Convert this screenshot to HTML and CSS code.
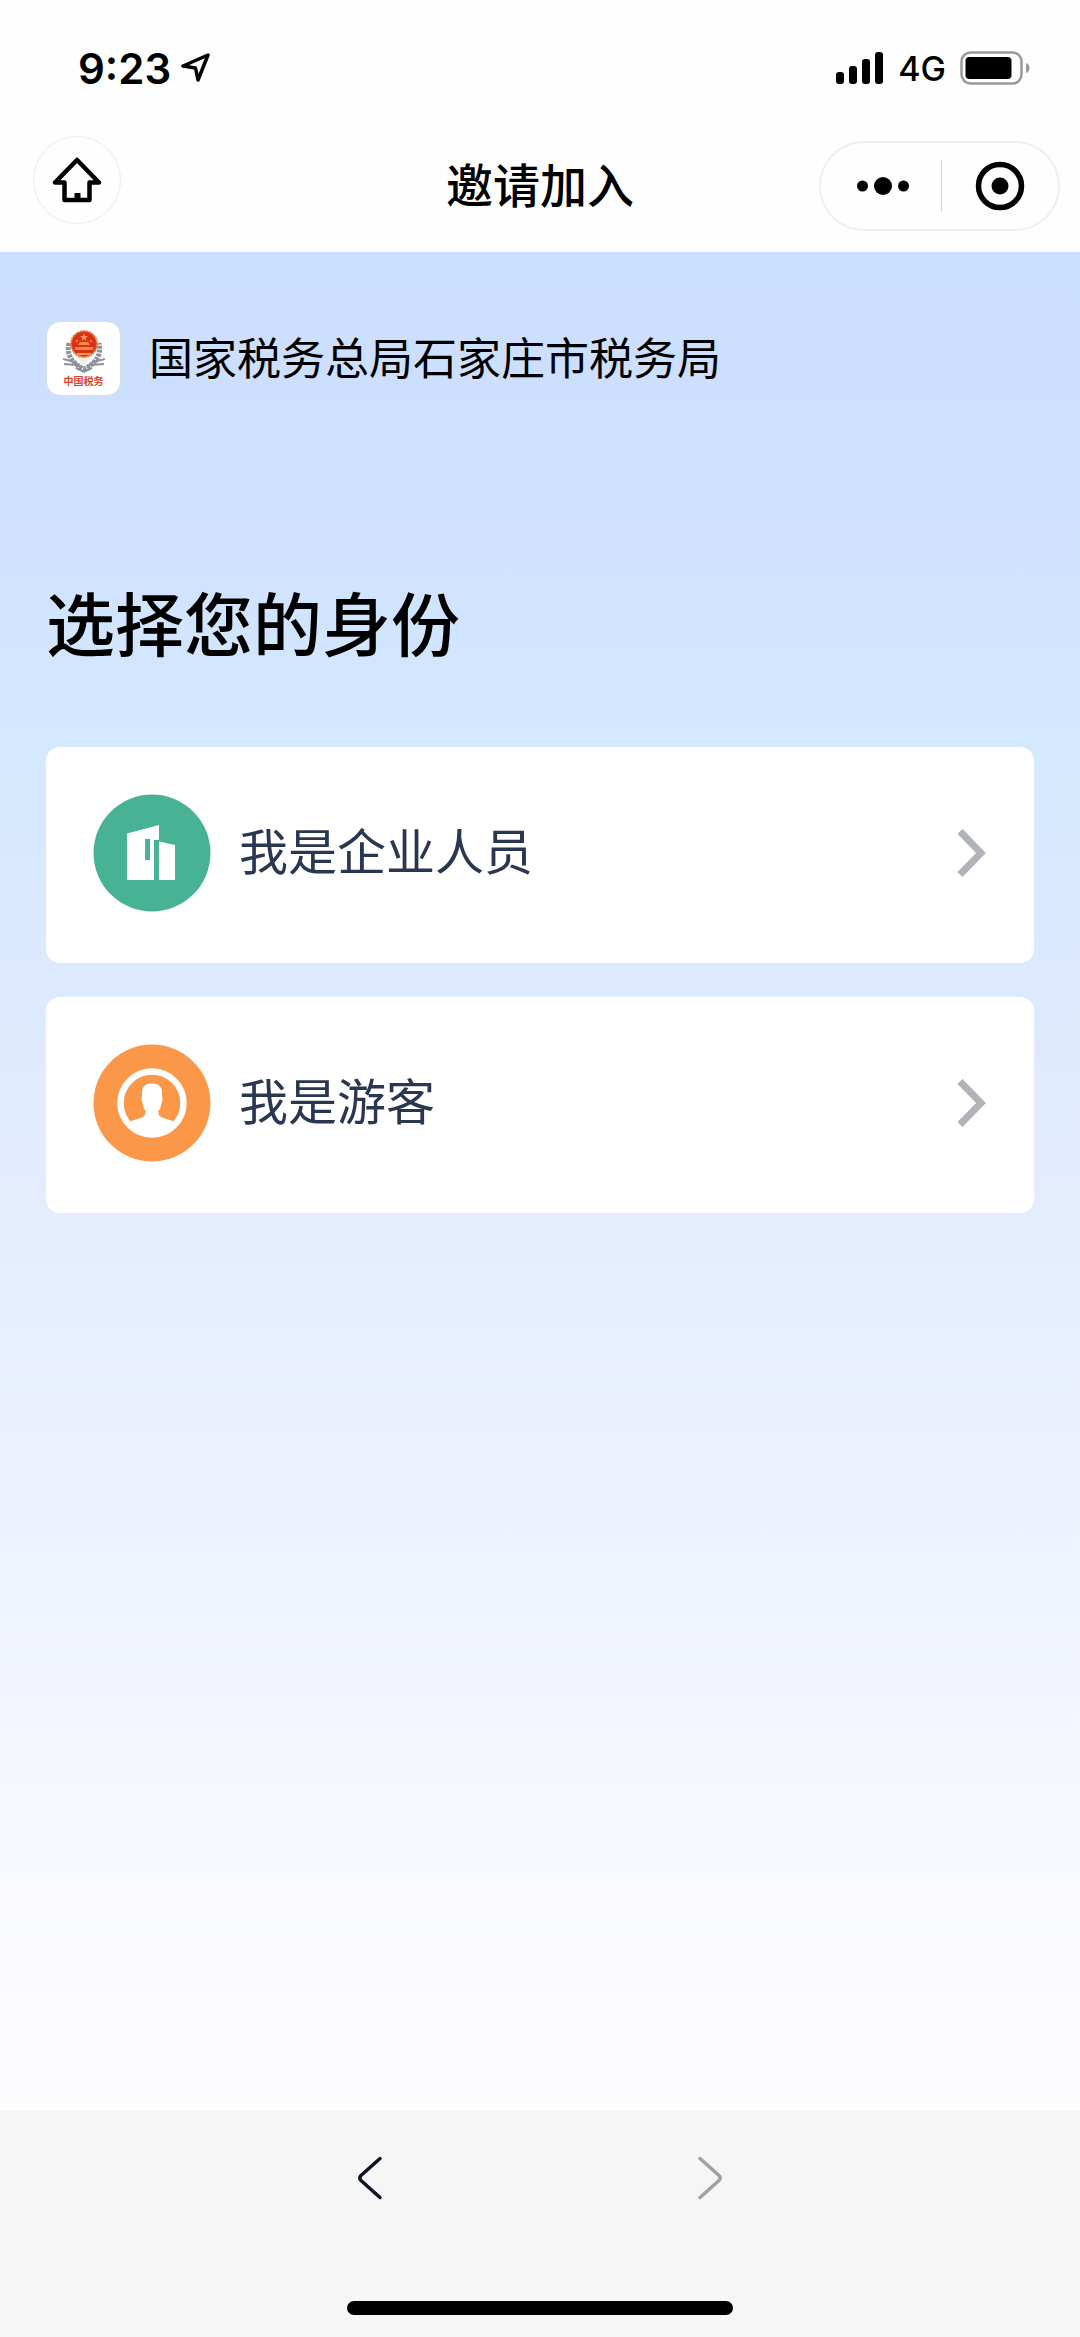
FILE: index.html
```html
<!DOCTYPE html>
<html lang="zh-CN">
<head>
    <meta charset="UTF-8">
    <meta name="viewport" content="width=device-width, initial-scale=1.0">
    <title>邀请加入</title>
    <link rel="stylesheet" href="styles.css">
</head>
<body>

    <div class="status-bar">
        <div class="status-left">
            <span class="time">9:23</span>
            <svg width="30" height="32" viewBox="0 0 30 32" fill="none" stroke="#000" stroke-width="3.500" stroke-linejoin="round">
                <path d="M27 3 L2 14 L14.500 16 L17 28 Z"/>
            </svg>
        </div>
        <div class="status-right">
            <svg width="48" height="32" viewBox="0 0 48 32">
                <rect x="0" y="20" width="8" height="12" rx="3"/>
                <rect x="13" y="14" width="8" height="18" rx="3"/>
                <rect x="26" y="7" width="8" height="25" rx="3"/>
                <rect x="39" y="0" width="8" height="32" rx="3"/>
            </svg>
            <span class="network">4G</span>
            <svg width="70" height="34" viewBox="0 0 70 34">
                <rect x="1.500" y="1.500" width="60" height="31" rx="9" fill="none" stroke="#999" stroke-width="2.500"/>
                <rect x="5.500" y="6" width="46" height="22" rx="4"/>
                <path d="M66 12 Q69.500 13.500 69.500 17 Q69.500 20.500 66 22 Z" fill="#999"/>
            </svg>
        </div>
    </div>

    <header class="navbar">
        <button class="home" type="button" aria-label="首页">
            <svg width="50" height="48" viewBox="0 0 50 48" fill="none" stroke="#000" stroke-width="4.500" stroke-linejoin="round">
                <path d="M25 4 L3 26.500 H12.500 V44 H37.500 V26.500 H47 Z"/>
                <path d="M25.500 37 V44" stroke-width="6"/>
            </svg>
        </button>
        <h1 class="navbar-title">邀请加入</h1>
        <div class="capsule">
            <button type="button" aria-label="更多">
                <svg width="52" height="20" viewBox="0 0 52 20">
                    <circle cx="5.500" cy="10" r="5.500"/>
                    <circle cx="26" cy="10" r="9"/>
                    <circle cx="46.500" cy="10" r="5.500"/>
                </svg>
            </button>
            <span class="divider"></span>
            <button type="button" aria-label="关闭">
                <svg width="50" height="50" viewBox="0 0 50 50">
                    <circle cx="25" cy="25" r="21.500" fill="none" stroke="#000" stroke-width="5.500"/>
                    <circle cx="25" cy="25" r="8.500"/>
                </svg>
            </button>
        </div>
    </header>

    <main class="content">
        <div class="org">
            <div class="org-logo">
                <svg width="42" height="46" viewBox="0 0 42 46">
                    <!-- ветви -->
                    <g fill="none" stroke="#8d9299">
                        <path d="M6 15 Q2 32 21 41 Q40 32 36 15" stroke-width="5" stroke-dasharray="3 1"/>
                        <path d="M0 31 L12 34 L18 40 M42 31 L30 34 L24 40" stroke-width="2"/>
                        <path d="M1 36 L14 37 M41 36 L28 37" stroke-width="2"/>
                        <path d="M13 40 L21 44 L29 40" stroke-width="2"/>
                    </g>
                    <path d="M14 29 L21 38 L28 29 Z" fill="#eceef0"/>
                    <circle cx="21" cy="16" r="13" fill="#d9301c" stroke="#e8813c" stroke-width="2" stroke-dasharray="2 1"/>
                    <path d="M21 5 L22 8 H25 L22.500 10 L23.500 13 L21 11 L18.500 13 L19.500 10 L17 8 H20 Z" fill="#f4a04a"/>
                    <path d="M15 17 H27 L25 14 H17 Z M12 19 H30 V22 H12 Z" fill="#f08a3c"/>
                    <path d="M14 26 H28" stroke="#f4a04a" stroke-width="2"/>
                    <circle cx="14" cy="13" r="1" fill="#f4a04a"/>
                    <circle cx="28" cy="13" r="1" fill="#f4a04a"/>
                </svg>
                <span class="logo-text">中国税务</span>
            </div>
            <span class="org-name">国家税务总局石家庄市税务局</span>
        </div>

        <h2 class="title">选择您的身份</h2>

        <div class="roles">
            <a class="role" href="#company">
                <svg width="118" height="118" viewBox="0 0 118 118">
                    <circle cx="59" cy="59" r="58.500" fill="#47b394"/>
                    <path d="M34 39.500 L66 31 V46 H61 V86 H34 Z" fill="#fff"/>
                    <path d="M66 47.500 L82 51 V86 H66 Z" fill="#fff"/>
                    <rect x="52" y="45" width="5" height="21" fill="#47b394"/>
                </svg>
                <span class="role-name">我是企业人员</span>
                <svg width="30" height="50" viewBox="0 0 30 50" fill="none" stroke="#b0b3b7" stroke-width="7">
                    <path d="M3 3.500 L24 25 L3 46.500"/>
                </svg>
            </a>
            <a class="role" href="#visitor">
                <svg width="118" height="118" viewBox="0 0 118 118">
                    <circle cx="59" cy="59" r="58.500" fill="#fb9748"/>
                    <circle cx="59" cy="59" r="31.500" fill="none" stroke="#fff" stroke-width="6.500"/>
                    <path d="M35 78 L49 73.500 Q53 72 52.500 67 Q50 64 49.500 59 Q47.500 55 49 51 Q48 39.500 59 39.500 Q70 39.500 69 51 Q70.500 55 68.500 59 Q68 64 65.500 67 Q65 72 69 73.500 L83 78 Q74 92 59 92 Q44 92 35 78 Z" fill="#fff"/>
                </svg>
                <span class="role-name">我是游客</span>
                <svg width="30" height="50" viewBox="0 0 30 50" fill="none" stroke="#b0b3b7" stroke-width="7">
                    <path d="M3 3.500 L24 25 L3 46.500"/>
                </svg>
            </a>
        </div>
    </main>

    <footer class="toolbar">
        <div class="toolbar-buttons">
            <button type="button" aria-label="后退">
                <svg width="26" height="44" viewBox="0 0 26 44" fill="none" stroke="#0c1524" stroke-width="3.500" stroke-linecap="round" stroke-linejoin="round">
                    <path d="M23 2.500 L4 19.500 Q1.500 22 4 24.500 L23 41.500"/>
                </svg>
            </button>
            <button type="button" aria-label="前进">
                <svg width="26" height="44" viewBox="0 0 26 44" fill="none" stroke="#a0a2a6" stroke-width="3.500" stroke-linecap="round" stroke-linejoin="round">
                    <path d="M3 2.500 L22 19.500 Q24.500 22 22 24.500 L3 41.500"/>
                </svg>
            </button>
        </div>
        <div class="home-indicator"></div>
    </footer>

</body>
</html>
```
FILE: styles.css
```css
* {
    box-sizing: border-box;
}
body {
    font-family: "Noto Sans CJK SC", sans-serif;
    display: flex;
    flex-direction: column;
    min-height: 100vh;
    background-color: #fefefe;
    color: #000;
    margin: 0;
}
svg {
    display: block;
    flex-shrink: 0;
}
button {
    display: flex;
    justify-content: center;
    align-items: center;
    background: none;
    border: none;
    padding: 0;
    cursor: pointer;
}

/* status bar */
.status-bar {
    display: flex;
    justify-content: space-between;
    align-items: center;
    height: 136px;
    padding: 0 50px 0 78px;
    font-family: Inter, sans-serif;
}
.status-left {
    display: flex;
    align-items: center;
    gap: 10px;
}
.status-right {
    display: flex;
    align-items: center;
    gap: 14px;
}
.time {
    font-size: 42px;
    font-weight: 600;
}
.network {
    font-size: 34px;
    font-weight: 500;
}

/* navbar */
.navbar {
    display: grid;
    grid-template-columns: 1fr auto 1fr;
    align-items: start;
    height: 116px;
    padding: 0 20px;
}
.home {
    width: 88px;
    height: 88px;
    margin-left: 13px;
    border: 1px solid #ececec;
    border-radius: 50%;
}
.navbar-title {
    font-size: 47px;
    font-weight: 500;
    line-height: 94px;
    margin: 0;
}
.capsule {
    display: flex;
    align-items: center;
    justify-self: end;
    width: 241px;
    height: 90px;
    margin-top: 5px;
    padding-left: 4px;
    border: 2px solid #efefef;
    border-radius: 45px;
}
.capsule button {
    flex: 1;
    height: 100%;
}
.divider {
    width: 1px;
    height: 52px;
    background-color: #d4d4d4;
}

/* content */
.content {
    flex: 1;
    padding: 69px 46px;
    background: linear-gradient(#cadffd 0%, #cfdfff 11%, #d3e8ff 25%, #dce9fe 38%, #e5edfe 52%, #eef3fe 70%, #f8f9fe 86%, #fdfdff 100%);
}
.org {
    display: flex;
    align-items: center;
    gap: 28px;
}
.org-logo {
    display: flex;
    flex-direction: column;
    align-items: center;
    width: 75px;
    height: 75px;
    padding-top: 6px;
    background-color: #fff;
    border: 1px solid #d5dcea;
    border-radius: 14px;
}
.logo-text {
    font-size: 10px;
    font-weight: 700;
    line-height: 14px;
    color: #d9432a;
}
.org-name {
    font-size: 44px;
    line-height: 64px;
    padding-bottom: 6px;
}
.title {
    font-size: 69px;
    font-weight: 500;
    line-height: 100px;
    margin: 175px 0 76px;
}
.roles {
    display: flex;
    flex-direction: column;
    gap: 34px;
}
.role {
    display: flex;
    align-items: center;
    gap: 28px;
    padding: 47px 47px 51px;
    background-color: #fff;
    border-radius: 14px;
    color: #2a3750;
    text-decoration: none;
}
.role-name {
    flex: 1;
    font-size: 49px;
    line-height: 72px;
    padding-bottom: 8px;
}

/* bottom toolbar */
.toolbar {
    display: flex;
    flex-direction: column;
    justify-content: space-between;
    align-items: center;
    height: 227px;
    padding: 46px 0 22px;
    background-color: #f6f6f6;
}
.toolbar-buttons {
    display: flex;
    gap: 314px;
}
.home-indicator {
    width: 386px;
    height: 14px;
    background-color: #000;
    border-radius: 7px;
}
```
